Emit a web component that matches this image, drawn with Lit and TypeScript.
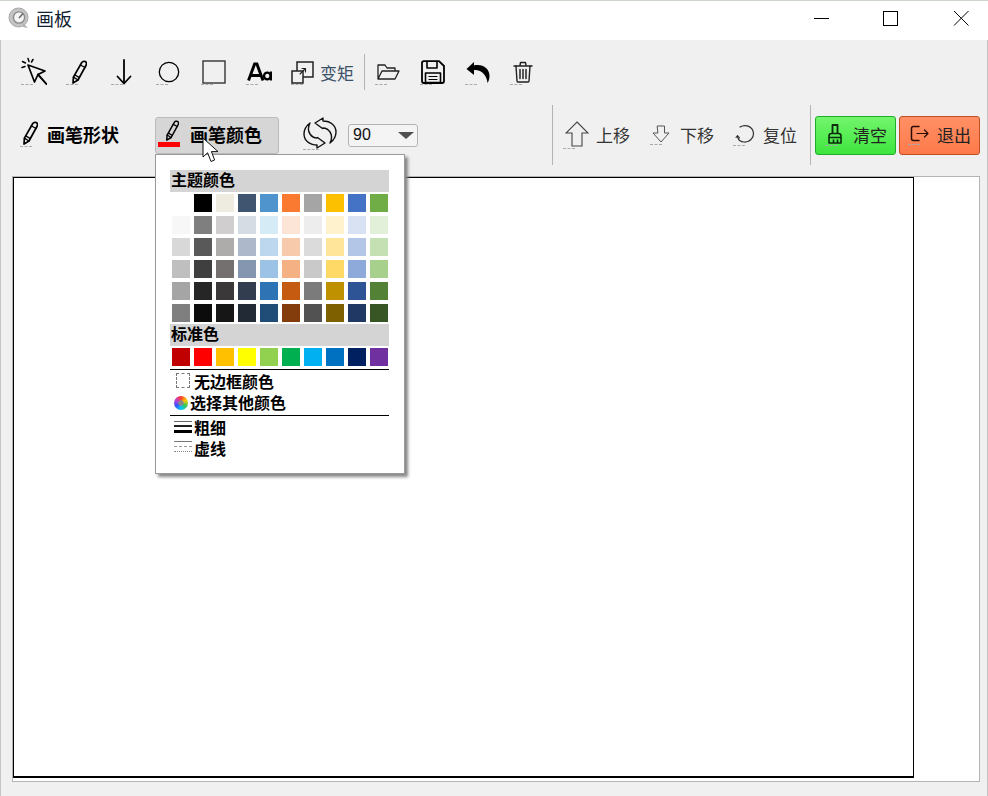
import { LitElement, html, css, svg } from "lit";
import { customElement } from "lit/decorators.js";

const THEME = [
  ["#ffffff","#000000","#eeece1","#3f5570","#4f94cd","#f97a30","#a5a5a5","#fcc000","#4472c4","#70ad47"],
  ["#f7f7f7","#7f7f7f","#d0cece","#d6dce4","#d5ecf6","#fce4d6","#ededed","#fff2cc","#d9e2f3","#e2efd9"],
  ["#d8d8d8","#595959","#aeabab","#adb9ca","#bdd7ee","#f7caac","#dbdbdb","#fee599","#b4c6e7","#c5e0b3"],
  ["#bfbfbf","#3f3f3f","#757070","#8496b0","#9cc3e5","#f4b183","#c9c9c9","#ffd965","#8eaadb","#a8d08d"],
  ["#a5a5a5","#262626","#3a3838","#323e4f","#2e74b5","#c55a11","#7b7b7b","#bf9000","#2f5496","#538135"],
  ["#7f7f7f","#0c0c0c","#171616","#222a35","#1f4d78","#833c0b","#525252","#7f6000","#1f3864","#375623"],
];
const STANDARD = ["#c00000","#ff0000","#ffc000","#ffff00","#92d050","#00b050","#00b0f0","#0070c0","#002060","#7030a0"];

const ico = (w: number, h: number, body: unknown) => html`<svg width=${w} height=${h} viewBox="0 0 ${w} ${h}" fill="none" stroke="#000" stroke-width="1.6" stroke-linecap="round" stroke-linejoin="round">${body}</svg>`;

const pointer = ico(26, 30, svg`
  <path d="M7 8 L24 14 L17 17.5 L13.5 25 Z" stroke-width="1.7"/><path d="M17 17.5 L25.5 27" stroke-width="1.9"/>
  <path d="M7 1.5 L8 4.5 M1.5 4.5 L4.5 6 M1 10.5 L4 9.5 M12 2.5 L10.5 5" stroke-width="1.5"/>`);
const pencil = (w: number, h: number) => html`<svg width=${w} height=${h} viewBox="0 0 16 24" fill="none" stroke="#000" stroke-width="1.7" stroke-linejoin="round" stroke-linecap="round">
  <path d="M10.5 3 C11.2 1.4 13 1 14.2 1.6 C15.4 2.2 15.8 3.6 15.2 5 L7 20 L2 23 L2.4 17.2 Z"/><path d="M9.4 5 L14.2 7.5 M4 15 L8 17.4 M2.4 17.2 L7 20" stroke-width="1.4"/></svg>`;
const down = ico(16, 28, svg`<path d="M8 2 L8 25" stroke-width="1.8"/><path d="M1.5 18.5 L8 25.5 L14.5 18.5" stroke-width="1.8"/>`);
const circle = ico(22, 22, svg`<circle cx="11" cy="11" r="9.7" stroke-width="1.3"/>`);
const square = ico(24, 24, svg`<rect x="1" y="1" width="22" height="22" stroke="#333" stroke-width="1.4" stroke-linejoin="miter"/>`);
const Aa = html`<svg width="26" height="24" viewBox="0 0 26 24"><path d="M2.5 20.5 L8.6 4 L10.9 4 L17 20.5 M5 15.5 L14.5 15.5" fill="none" stroke="#000" stroke-width="2.9"/><circle cx="21.3" cy="16" r="3.3" fill="none" stroke="#000" stroke-width="2.3"/><path d="M25 11.5 L25 20.5" stroke="#000" stroke-width="2.2"/></svg>`;
const transform = ico(24, 24, svg`
  <rect x="6" y="2" width="16" height="15" stroke-width="1.5" stroke="#222" stroke-linejoin="miter"/>
  <rect x="1" y="11" width="11" height="12" fill="#f0f0f0" stroke-width="1.5" stroke="#222" stroke-linejoin="miter"/>
  <path d="M9 14 L14 9 M11 8.5 L14.5 8.5 L14.5 12" stroke-width="1.1" stroke="#222"/>`);
const folder = ico(24, 20, svg`<path d="M2 17 L2 3 L9 3 L11 6 L19 6 L19 9 M2 17 L6 9 L23 9 L19 17 Z" stroke-width="1.3" stroke="#222"/>`);
const save = ico(24, 24, svg`
  <path d="M3 1.2 L18 1.2 L23 6 L23 21 Q23 23 21 23 L3 23 Q1 23 1 21 L1 3 Q1 1.2 3 1.2 Z" stroke-width="1.8"/>
  <path d="M6 1.5 L6 8 L16 8 L16 1.5" stroke-width="1.6"/><rect x="4.5" y="13" width="15" height="9.5" stroke-width="1.6"/><path d="M8 16.5 L16 16.5 M8 19.5 L16 19.5" stroke-width="1.2"/>`);
const undo = html`<svg width="24" height="24" viewBox="0 0 24 24"><path d="M0.5 9 L8 2 L8 5.5 C16 3.5 23.5 8 23.5 16 C23.5 19 22.5 21.5 21.5 23 C21 16 16 9.5 8 10 L8 15 Z" fill="#000"/></svg>`;
const trash = ico(20, 22, svg`
  <path d="M1 5 L19 5 M7 4.5 L7.5 1.5 L12.5 1.5 L13 4.5" stroke-width="1.5" stroke="#222"/>
  <path d="M3 5 L4 20 Q4 21 5 21 L15 21 Q16 21 16 20 L17 5" stroke-width="1.4" stroke="#222"/>
  <path d="M7 8.5 L7 17.5 M10 8.5 L10 17.5 M13 8.5 L13 17.5" stroke-width="1.6" stroke="#333"/>`);
const band = "M12 6 L20 1 L20 4 C28 4 33 9 33 15 C33 19 31 23 27 26 C29 22 29 18 27 15 C25 12 22 11 20 11 L19.5 11.5 Z";
const sync = ico(34, 32, svg`
  <path d=${band} stroke-width="1.4" stroke="#111"/>
  <path d=${band} stroke-width="1.4" stroke="#111" transform="rotate(180 17 16)"/>`);
const up = ico(24, 26, svg`<path d="M12 1 L23 12 L17 12 L17 25 L7 25 L7 12 L1 12 Z" stroke-width="1.1" stroke="#444" stroke-linejoin="miter"/>`);
const dn = ico(18, 18, svg`<path d="M5.5 1 L12.5 1 L12.5 8 L17 8 L9 17 L1 8 L5.5 8 Z" stroke-width="1" stroke="#555" stroke-linejoin="miter"/>`);
const reset = ico(20, 20, svg`<path d="M5 3 C9 0.5 16 1 18 7 C20 13 15 18.5 9 18 C6 18 3.5 16 2.5 13" stroke-width="1.2" stroke="#333"/><path d="M1 13.5 L2.5 11.5 L4.5 13.8" stroke-width="1.1" stroke="#333"/>`);
const broom = html`<svg width="16" height="20" viewBox="0 0 16 20" fill="none" stroke="#0c2a0c" stroke-linejoin="round">
  <path d="M5.5 9 L5.5 1 L10.5 1 L10.5 9" stroke-width="1.8"/>
  <path d="M2 19 L2 12 Q2 9.5 4.5 9.5 L11.5 9.5 Q14 9.5 14 12 L14 19 Z M2 13.5 L14 13.5 M6.5 19 L6.5 15.5 M10.5 19 L10.5 15.5" stroke-width="1.6"/></svg>`;
const exit = ico(20, 18, svg`
  <path d="M9 1.5 L3.5 1.5 Q1.5 1.5 1.5 3.5 L1.5 13.5 Q1.5 15.5 3.5 15.5 L9 15.5" stroke-width="1.5" stroke="#2a0e05"/>
  <path d="M7 8.5 L18 8.5 M14.5 5 L18 8.5 L14.5 12" stroke-width="1.2" stroke="#2a0e05"/>`);
const logo = html`<svg width="22" height="22" viewBox="0 0 22 22"><circle cx="10.5" cy="10.5" r="9.5" fill="#c4c4c4" stroke="#a8a8a8"/><path d="M15 16 L20 21 L15 20 Z" fill="#b0b0b0"/><circle cx="11" cy="10.5" r="5.6" fill="#f4f4f4" stroke="#8c8c8c" stroke-width="1.4"/><path d="M11 11 L15 6.5" stroke="#6a6a6a" stroke-width="1.6"/></svg>`;
const cursor = html`<svg width="20" height="27" viewBox="0 0 20 27"><path d="M1 1 L1 20 L5.6 15.8 L9 24.5 L12.6 23 L9.4 14.6 L16 14.6 Z" fill="#fff" stroke="#111" stroke-width="1"/></svg>`;

@customElement("app-root")
export class AppRoot extends LitElement {
  static styles = css`
    :host { display: block; width: 988px; height: 796px; overflow: hidden; font-family: "Noto Sans CJK SC", "Liberation Sans", sans-serif; color: #111; }
    .window { position: relative; box-sizing: border-box; height: 796px; background: #f0f0f0; border-left: 1px solid #c4c4c4; border-right: 1px solid #c4c4c4; }
    .title { height: 40px; box-sizing: border-box; background: #fff; border-top: 1px solid #ccd4cc; display: flex; align-items: center; padding: 0 19px 6px 8px; margin: 0 -1px; }
    .title .name { font-size: 18px; line-height: 22px; margin-left: 6px; color: #102030; flex: 1; }
    .controls { display: flex; align-items: center; }
    .controls svg { display: block; }
    .controls .max { margin-left: 52px; }
    .controls .close { margin-left: 55px; }
    .row1 { height: 65px; display: flex; align-items: center; padding: 0 0 1px 10px; box-sizing: border-box; }
    .tool { width: 45px; height: 34px; display: flex; align-items: center; justify-content: center; position: relative; flex: none; }
    .tool::after, .mark::after { content: ""; position: absolute; left: 10px; bottom: 3px; width: 12px; height: 1px; border-top: 1px dashed #aaa; }
    .tool svg, .mark svg { display: block; }
    .wide { width: 83px; justify-content: flex-start; gap: 5px; padding-left: 10px; box-sizing: border-box; font-size: 17px; color: #3c5068; white-space: nowrap; }
    .sep { width: 1px; background: #b4b4b4; flex: none; }
    .row1 .sep { height: 36px; }
    .row2 { height: 60px; display: flex; align-items: center; padding-left: 11px; }
    .row2 .sep { height: 60px; }
    .label { font-size: 18px; font-weight: 700; line-height: 24px; color: #000; white-space: nowrap; padding-bottom: 2px; }
    .shape { width: 143px; display: flex; align-items: center; gap: 9px; padding-left: 10px; box-sizing: border-box; height: 34px; position: relative; flex: none; }
    .shape .mark { top: -2px; }
    .colour { width: 124px; height: 37px; box-sizing: border-box; background: #d6d6d6; border: 1px solid #bbb; border-radius: 3px; display: flex; align-items: center; padding-left: 9px; gap: 11px; position: relative; flex: none; }
    .colour .pen { position: relative; top: -5px; }
    .colour .pen svg { display: block; }
    .colour .red { position: absolute; left: 2px; bottom: 6px; width: 22px; height: 5px; background: #ff0000; }
    .syncbox { width: 34px; margin-left: 24px; height: 32px; position: relative; flex: none; top: -2px; }
    .syncbox svg { display: block; }
    .syncbox::after { content: ""; position: absolute; left: 0; bottom: -2px; width: 16px; height: 1px; border-top: 1px dashed #aaa; }
    .select { margin-left: 11px; width: 70px; height: 23px; box-sizing: border-box; border: 1px solid #b4b4b4; border-radius: 3px; background: #f4f4f4; display: flex; align-items: center; padding: 0 3px 0 4px; font-family: "Liberation Sans", sans-serif; font-size: 16px; color: #111; flex: none; }
    .select span { flex: 1; }
    .caret { width: 0; height: 0; border-left: 8px solid transparent; border-right: 8px solid transparent; border-top: 7px solid #505050; }
    .spacer { width: 134px; flex: none; }
    .act { display: flex; align-items: center; font-size: 17px; color: #333; white-space: nowrap; position: relative; flex: none; padding-bottom: 2px; }
    .act svg { display: block; }
    .mark { position: relative; display: block; }
    .mark::after { left: -2px; bottom: -3px; }
    .a1 { margin-left: 12px; gap: 7px; }
    .a2 { margin-left: 22px; gap: 10px; }
    .a3 { margin-left: 21px; gap: 8px; }
    .a3 + .sep { margin-left: 13px; }
    .btn { height: 39px; width: 81px; box-sizing: border-box; border-radius: 3px; display: flex; align-items: center; padding: 0 0 2px 11px; gap: 10px; font-size: 17px; color: #222; flex: none; }
    .green { background: linear-gradient(#72f56c, #3ee53e); border: 1px solid #1fae2a; margin-left: 4px; }
    .orange { background: linear-gradient(#ff9065, #ff7a4a); border: 1px solid #bf4f25; margin-left: 3px; padding-left: 10px; gap: 7px; }
    .canvas { margin: 11px 7px 0 11px; height: 606px; box-sizing: border-box; background: #fff; border: 1px solid #b4b4b4; }
    .paper { width: 901px; height: 601px; box-sizing: border-box; background: #fff; border: 1px solid #000; border-bottom-width: 2px; }
    .menu { position: absolute; left: 154px; top: 154px; width: 250px; height: 320px; box-sizing: border-box; background: #fff; border: 1px solid #9a9a9a; box-shadow: 3px 3px 3px #888; padding: 15px 0 0 14px; }
    .head { width: 219px; height: 22px; background: #d4d4d4; font-size: 16px; font-weight: 700; line-height: 19px; color: #000; padding-left: 1px; box-sizing: border-box; }
    .grid { display: grid; grid-template-columns: repeat(10, 18px); gap: 4px; padding: 2px 0 2px 2px; }
    .cell { width: 18px; height: 18px; }
    .rule { width: 219px; height: 1px; background: #000; }
    .rule.top { margin-top: 1px; margin-bottom: 3px; }
    .rule.mid { margin-top: 0; margin-bottom: 3px; }
    .item { height: 21px; box-sizing: border-box; display: flex; align-items: center; font-size: 16px; font-weight: 700; line-height: 17px; color: #000; padding: 0 0 4px 24px; position: relative; white-space: nowrap; }
    .item.pick { padding-left: 20px; }
    .noborder { position: absolute; left: 6px; top: 0; width: 14px; height: 15px; box-sizing: border-box; border: 1px dashed #777; }
    .wheel { position: absolute; left: 4px; top: 2px; width: 14px; height: 14px; border-radius: 50%; background: radial-gradient(circle, #888 0 2.5px, transparent 3px), conic-gradient(#ff3b30, #ffcc00, #34c759, #00c7ff, #3355ff, #c040d0, #ff3b30); }
    .thick { position: absolute; left: 4px; top: 2px; width: 18px; display: flex; flex-direction: column; gap: 3px; }
    .thick i { display: block; background: #222; }
    .thick i:nth-child(1) { height: 1px; background: #666; }
    .thick i:nth-child(2) { height: 2px; }
    .thick i:nth-child(3) { height: 3px; background: #000; }
    .dashes { position: absolute; left: 4px; top: 1px; width: 18px; display: flex; flex-direction: column; gap: 4px; }
    .dashes i { display: block; height: 0; border-top: 1px solid #777; }
    .dashes i:nth-child(2) { border-top-style: dashed; border-color: #999; }
    .dashes i:nth-child(3) { border-top-style: dotted; border-color: #888; }
    .cursor { position: absolute; left: 201px; top: 137px; }
    .cursor svg { display: block; }
  `;

  render() {
    return html`<div class="window">
      <div class="title">
        ${logo}<span class="name">画板</span>
        <div class="controls">
          <svg width="16" height="16" viewBox="0 0 16 16"><path d="M0 8.5 H15" stroke="#000"/></svg>
          <svg class="max" width="16" height="16" viewBox="0 0 16 16"><rect x="1.5" y="1.5" width="14" height="14" fill="none" stroke="#000"/></svg>
          <svg class="close" width="16" height="16" viewBox="0 0 16 16"><path d="M1 1 L15.5 15.5 M15.5 1 L1 15.5" stroke="#000"/></svg>
        </div>
      </div>
      <div class="row1">
        <div class="tool">${pointer}</div>
        <div class="tool">${pencil(16, 24)}</div>
        <div class="tool">${down}</div>
        <div class="tool">${circle}</div>
        <div class="tool">${square}</div>
        <div class="tool">${Aa}</div>
        <div class="tool wide">${transform}<span>变矩</span></div>
        <div class="sep"></div>
        <div class="tool">${folder}</div>
        <div class="tool">${save}</div>
        <div class="tool">${undo}</div>
        <div class="tool">${trash}</div>
      </div>
      <div class="row2">
        <div class="shape"><span class="mark">${pencil(16, 24)}</span><span class="label">画笔形状</span></div>
        <div class="colour"><span class="pen">${pencil(14, 21)}</span><span class="red"></span><span class="label">画笔颜色</span></div>
        <div class="syncbox">${sync}</div>
        <div class="select"><span>90</span><i class="caret"></i></div>
        <div class="spacer"></div>
        <div class="sep"></div>
        <div class="act a1"><span class="mark">${up}</span><span>上移</span></div>
        <div class="act a2"><span class="mark">${dn}</span><span>下移</span></div>
        <div class="act a3"><span class="mark">${reset}</span><span>复位</span></div>
        <div class="sep"></div>
        <div class="btn green"><span class="mark">${broom}</span><span>清空</span></div>
        <div class="btn orange"><span class="mark">${exit}</span><span>退出</span></div>
      </div>
      <div class="canvas"><div class="paper"></div></div>

      <div class="menu">
        <div class="head">主题颜色</div>
        <div class="grid">${THEME.flat().map((c) => html`<div class="cell" style="background:${c}"></div>`)}</div>
        <div class="head">标准色</div>
        <div class="grid">${STANDARD.map((c) => html`<div class="cell" style="background:${c}"></div>`)}</div>
        <div class="rule top"></div>
        <div class="item"><i class="noborder"></i>无边框颜色</div>
        <div class="item pick"><i class="wheel"></i>选择其他颜色</div>
        <div class="rule mid"></div>
        <div class="item"><span class="thick"><i></i><i></i><i></i></span>粗细</div>
        <div class="item"><span class="dashes"><i></i><i></i><i></i></span>虚线</div>
      </div>
      <div class="cursor">${cursor}</div>
    </div>`;
  }
}
